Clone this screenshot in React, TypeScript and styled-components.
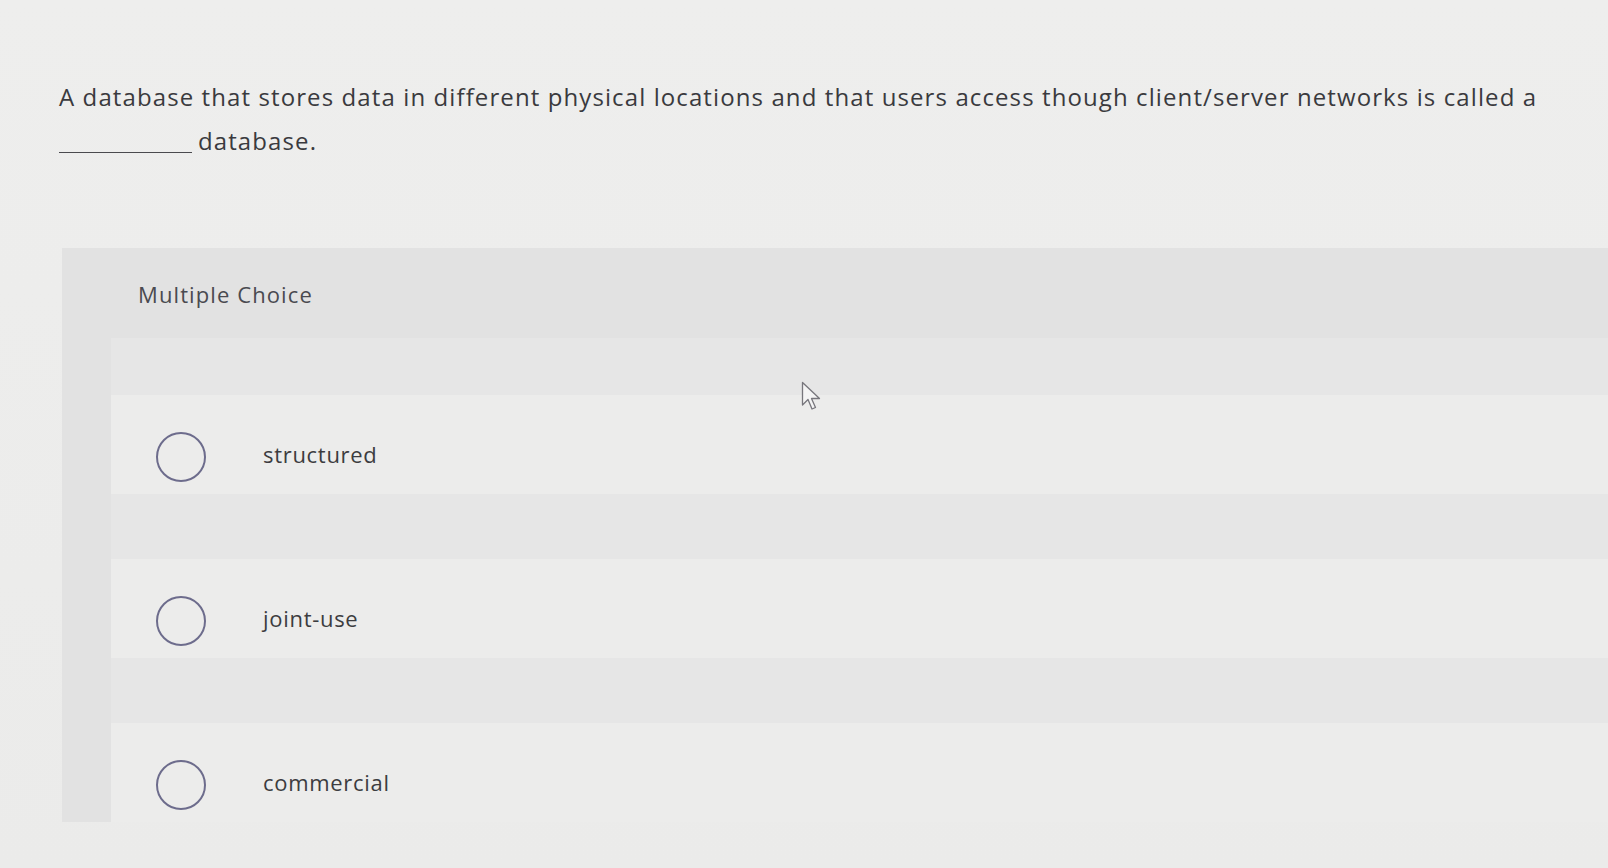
import styled, { createGlobalStyle } from "styled-components";

const GlobalStyle = createGlobalStyle`
  html, body {
    margin: 0;
    padding: 0;
    background: #ececec;
  }
  body {
    font-family: "Open Sans", Lato, "Liberation Sans", sans-serif;
    color: #3a3a3e;
  }
`;

const Page = styled.div`
  position: relative;
  width: 1608px;
  height: 868px;
  overflow: hidden;
  background: linear-gradient(180deg, #eeeeed 0%, #ebebea 100%);
`;

const Question = styled.div`
  padding: 75px 40px 0 59px;
  font-size: 24px;
  line-height: 44px;
  letter-spacing: 1.1px;
  color: #3a3a3e;
`;

const Line = styled.div`
  white-space: nowrap;
`;

const Blank = styled.span`
  display: inline-block;
  width: 133px;
  height: 1px;
  margin-right: 6px;
  background: #4a4a4e;
  vertical-align: -3px;
`;

const Panel = styled.section`
  margin: 85px 0 0 62px;
  background: #e2e2e2;
`;

const PanelHeader = styled.div`
  height: 90px;
  display: flex;
  align-items: center;
  padding: 2px 0 0 76px;
  box-sizing: border-box;
  font-size: 22px;
  color: #4a4a50;
  letter-spacing: 1.1px;
`;

const Options = styled.div`
  margin-left: 49px;
  padding-top: 57px;
  display: flex;
  flex-direction: column;
  gap: 65px;
  background: #e6e6e6;
`;

const Option = styled.label`
  display: flex;
  align-items: center;
  height: 99px;
  box-sizing: border-box;
  padding: 19px 0 0 45px;
  background: #ececeb;
  font-size: 22px;
  color: #3c3c40;
  letter-spacing: 0.7px;
  cursor: pointer;
`;

const Radio = styled.span`
  width: 46px;
  height: 46px;
  border: 2px solid #6d6c8c;
  border-radius: 50%;
  flex-shrink: 0;
  margin-right: 57px;
  margin-top: 5px;
`;

const Pointer = styled.svg`
  position: absolute;
  left: 801px;
  top: 381px;
`;

const choices = ["structured", "joint-use", "commercial"];

export default function App() {
  return (
    <>
      <GlobalStyle />
      <Page>
        <Question>
          <Line>
            A database that stores data in different physical locations and
            that users access though client/server networks is called a
          </Line>
          <Line>
            <Blank />
            database.
          </Line>
        </Question>
        <Panel>
          <PanelHeader>Multiple Choice</PanelHeader>
          <Options>
            {choices.map((c) => (
              <Option key={c}>
                <Radio />
                {c}
              </Option>
            ))}
          </Options>
        </Panel>
        <Pointer width="22" height="32" viewBox="0 0 22 32">
          <path
            d="M1.5 1.5 L1.5 24 L7 18.5 L11 28 L14.5 26.5 L10.5 17.5 L18.5 17.5 Z"
            fill="#f4f4f4"
            stroke="#77767c"
            strokeWidth="1.3"
            strokeLinejoin="round"
          />
        </Pointer>
      </Page>
    </>
  );
}
